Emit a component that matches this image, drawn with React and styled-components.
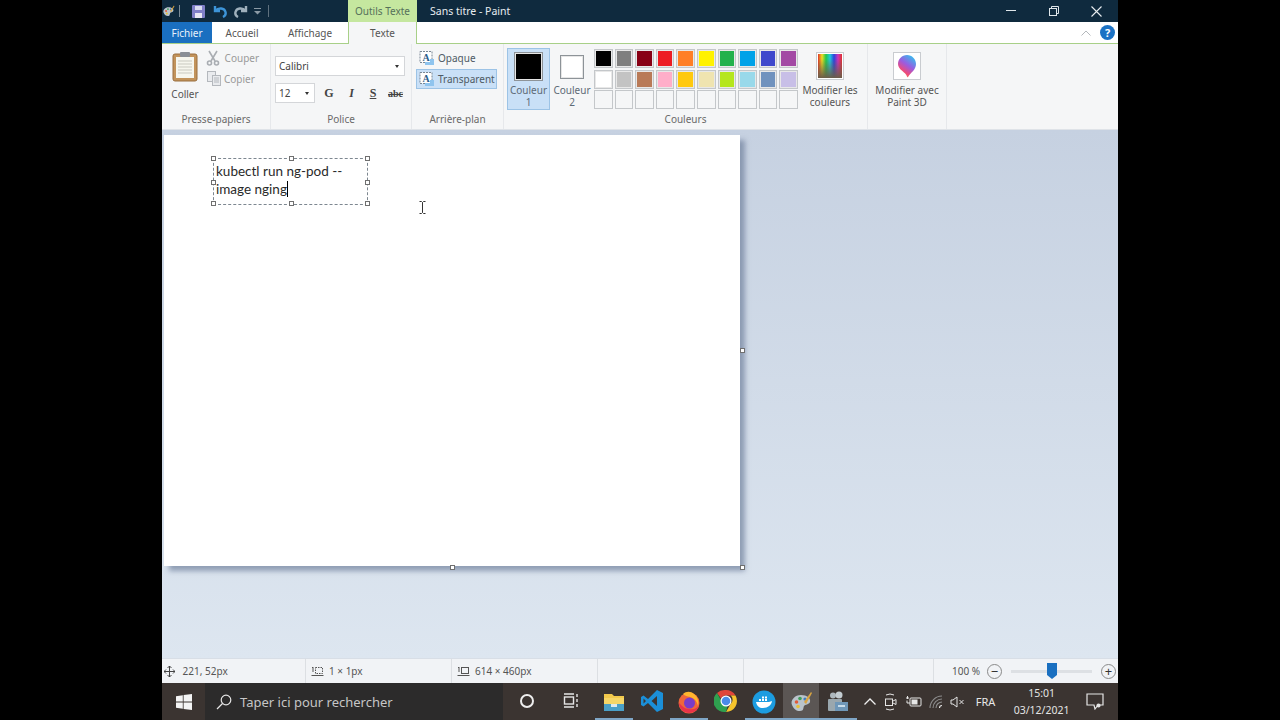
import React from 'react';
import styled, { createGlobalStyle } from 'styled-components';

const Global = createGlobalStyle`
  html, body { margin: 0; background: #000; }
  * { box-sizing: border-box; }
`;

const Page = styled.div`
  width: 1280px;
  height: 720px;
  overflow: hidden;
  background: #000;
  padding-left: 162px;
  font-family: 'Noto Sans', 'Open Sans', sans-serif;
`;

const Win = styled.div`
  width: 956px;
  height: 720px;
  display: flex;
  flex-direction: column;
`;

/* title bar */
const TitleBar = styled.div`
  height: 22px;
  flex: none;
  background: #0f2a3e;
  display: flex;
  align-items: center;
  color: #e8edf0;
  font-size: 10.5px;
`;

const Quick = styled.div`
  width: 186px;
  display: flex;
  align-items: center;
  height: 100%;
`;

const QuickSlot = styled.span`
  width: ${(p) => p.$w}px;
  height: 16px;
  display: flex;
  align-items: center;
  justify-content: center;
`;

const ToolTab = styled.div`
  width: 69px;
  height: 22px;
  background: #c5e79f;
  color: #55705a;
  font-size: 10px;
  display: flex;
  align-items: center;
  justify-content: center;
`;

const Title = styled.div`
  margin-left: 13px;
  flex: 1;
  font-size: 10.5px;
`;

const WinBtn = styled.span`
  width: 43px;
  height: 22px;
  display: flex;
  align-items: center;
  justify-content: center;
`;

/* tabs */
const TabRow = styled.div`
  height: 22px;
  flex: none;
  background: #fff;
  border-bottom: 1px solid #a8d088;
  display: flex;
  padding-right: 3px;
  align-items: stretch;
`;

const Tab = styled.div`
  width: ${(p) => p.$w}px;
  font-size: 10px;
  display: flex;
  align-items: center;
  justify-content: center;
  color: ${(p) => (p.$file ? '#e8f2fb' : '#555')};
  background: ${(p) => (p.$file ? '#1a6fc0' : p.$active ? '#f5f6f7' : '#fff')};
  ${(p) =>
    p.$active
      ? `border-left: 1px solid #a8d088; border-right: 1px solid #a8d088; height: 22px;`
      : ''}
`;

const TabEnd = styled.div`
  margin-left: auto;
  display: flex;
  align-items: center;
  gap: 9px;
`;

const Help = styled.span`
  width: 15px;
  height: 15px;
  border-radius: 50%;
  background: #1b72c4;
  color: #fff;
  font-size: 11px;
  font-weight: 700;
  display: flex;
  align-items: center;
  justify-content: center;
`;

/* ribbon */
const Ribbon = styled.div`
  height: 86px;
  flex: none;
  background: #f5f6f7;
  display: flex;
  border-bottom: 1px solid #dfe3e8;
`;

const Group = styled.div`
  width: ${(p) => p.$w}px;
  flex: none;
  display: flex;
  flex-direction: column;
  border-right: 1px solid #e6e8eb;
`;

const GroupBody = styled.div`
  flex: 1;
  display: flex;
  padding: 4px 0 0 ${(p) => p.$pad || 0}px;
  gap: ${(p) => p.$gap || 0}px;
`;

const GroupLabel = styled.div`
  height: 18px;
  margin-bottom: 0;
  text-align: center;
  font-size: 10px;
  line-height: 17px;
  color: #6a6a6a;
`;

const Big = styled.div`
  width: ${(p) => p.$w}px;
  flex: none;
  display: flex;
  flex-direction: column;
  align-items: center;
  font-size: 10px;
  line-height: 12px;
  color: #555;
  text-align: center;
`;

const BigIcon = styled.div`
  height: 36px;
  display: flex;
  align-items: center;
  justify-content: center;
  margin-bottom: ${(p) => p.$mb || 0}px;
`;

const SmallCol = styled.div`
  margin-left: 7px;
  display: flex;
  flex-direction: column;
  gap: 4px;
  padding-top: 1px;
`;

const SmallBtn = styled.div`
  height: 17px;
  display: flex;
  align-items: center;
  gap: 2px;
  font-size: 10px;
  color: #9a9a9a;
`;

const Combo = styled.div`
  width: ${(p) => p.$w}px;
  height: 20px;
  background: #fff;
  border: 1px solid #d4d6d9;
  font-size: 10px;
  color: #444;
  padding: 0 5px 0 3px;
  display: flex;
  align-items: center;
  justify-content: space-between;
  &::after {
    content: '';
    border-left: 2.5px solid transparent;
    border-right: 2.5px solid transparent;
    border-top: 3px solid #333;
  }
`;

const FontCol = styled.div`
  padding-top: 8px;
  display: flex;
  flex-direction: column;
  gap: 7px;
`;

const FontRow = styled.div`
  display: flex;
  align-items: center;
`;

const Fmt = styled.span`
  width: ${(p) => p.$w || 22}px;
  text-align: center;
  font-family: 'Liberation Serif', serif;
  font-size: ${(p) => p.$size || 12}px;
  font-weight: 700;
  font-style: ${(p) => (p.$i ? 'italic' : 'normal')};
  text-decoration: ${(p) => p.$deco || 'none'};
  color: #444;
`;

const BgCol = styled.div`
  display: flex;
  flex-direction: column;
  gap: 1px;
`;

const BgBtn = styled.div`
  width: 81px;
  height: 20px;
  display: flex;
  align-items: center;
  gap: 3px;
  padding-left: 2px;
  font-size: 10px;
  color: #4e5a64;
  background: ${(p) => (p.$on ? '#c9e0f7' : 'transparent')};
  border: 1px solid ${(p) => (p.$on ? '#9cc3e6' : 'transparent')};
`;

const ColorBtn = styled.div`
  width: ${(p) => p.$w}px;
  height: 62px;
  flex: none;
  display: flex;
  flex-direction: column;
  align-items: center;
  font-size: 10px;
  line-height: 12px;
  text-align: center;
  color: #5d6a76;
  background: ${(p) => (p.$on ? '#c9e0f7' : 'transparent')};
  border: 1px solid ${(p) => (p.$on ? '#9cc3e6' : 'transparent')};
`;

const SwatchBox = styled.div`
  height: 35px;
  display: flex;
  align-items: center;
  justify-content: center;
`;

const BigSwatch = styled.div`
  width: ${(p) => p.$s}px;
  height: ${(p) => p.$s}px;
  background: ${(p) => p.$c};
  border: 1px solid #8d9398;
  box-shadow: inset 0 0 0 1px #e6e6e6;
`;

const Palette = styled.div`
  width: 204px;
  height: 61px;
  margin: 1px 0 0 0;
  display: grid;
  grid-template-columns: repeat(10, 1fr);
  grid-auto-rows: 19px;
  gap: 1.5px 2px;
`;

const Cell = styled.div`
  border: 1px solid #c4c7ca;
  background: ${(p) => p.$c || '#f5f6f7'};
  box-shadow: inset 0 0 0 1px ${(p) => (p.$c ? '#e8e8e8' : '#f5f6f7')};
`;

const IconFrame = styled.div`
  width: 28px;
  height: 28px;
  background: #fff;
  border: 1px solid #c9ccd0;
  display: flex;
  align-items: center;
  justify-content: center;
`;

const Spectrum = styled.div`
  width: 24px;
  height: 24px;
  background:
    linear-gradient(to bottom, transparent 20%, #6b5d4a 100%),
    linear-gradient(to right, #e0342a, #eedd22, #22c84a, #22c8dd, #2a44dd, #cc33bb, #e0342a);
`;

/* canvas */
const Workspace = styled.div`
  flex: 1;
  position: relative;
  padding: 5px 0 0 2px;
  background: linear-gradient(to bottom, #c6d1e1, #dde6f0);
  border-left: 0;
`;

const Paper = styled.div`
  position: relative;
  width: 576px;
  height: 431px;
  background: #fff;
  box-shadow: 5px 5px 5px rgba(105, 122, 150, 0.65);
`;

const Grip = styled.span`
  position: absolute;
  width: 5px;
  height: 5px;
  background: #fff;
  border: 1px solid #6f6f6f;
  left: ${(p) => p.$x}px;
  top: ${(p) => p.$y}px;
`;

const TextBox = styled.div`
  position: absolute;
  left: 49px;
  top: 23px;
  width: 155px;
  height: 47px;
  border: 1px dashed #7d8790;
  padding: 3px 2px;
  font-family: Lato, 'Liberation Sans', sans-serif;
  font-size: 13.5px;
  line-height: 18px;
  color: #2a2a2a;
`;

const Caret = styled.span`
  display: inline-block;
  width: 1px;
  height: 16px;
  background: #000;
  vertical-align: -3px;
`;

const Beam = styled.svg`
  position: absolute;
  left: 205px;
  top: 42px;
`;

/* status bar */
const Status = styled.div`
  height: 25px;
  flex: none;
  background: #f1f3f6;
  border-top: 1px solid #d8dee6;
  display: flex;
  align-items: center;
  font-size: 10px;
  color: #555;
`;

const StatusCell = styled.div`
  width: ${(p) => p.$w}px;
  height: 100%;
  flex: none;
  display: flex;
  align-items: center;
  gap: 5px;
  padding-left: ${(p) => p.$pad || 0}px;
  border-right: ${(p) => (p.$end ? 'none' : '1px solid #dcdfe3')};
`;

const Zoom = styled.div`
  margin-left: 18px;
  display: flex;
  align-items: center;
`;

const RoundBtn = styled.span`
  width: 15px;
  height: 15px;
  border-radius: 50%;
  border: 1px solid #8a8a8a;
  color: #333;
  font-size: 13px;
  line-height: 12px;
  text-align: center;
  flex: none;
`;

const SliderTrack = styled.div`
  position: relative;
  width: 81px;
  height: 3px;
  margin: 0 9px;
  background: #dde0e4;
`;

const Thumb = styled.svg`
  position: absolute;
  left: 36px;
  top: -7px;
`;

/* taskbar */
const Taskbar = styled.div`
  height: 37px;
  flex: none;
  background: #3b3431;
  display: flex;
  align-items: stretch;
  color: #e8e8e8;
`;

const Start = styled.div`
  width: 43px;
  display: flex;
  align-items: center;
  justify-content: center;
  flex: none;
`;

const Search = styled.div`
  width: 298px;
  flex: none;
  background: #2c2b2b;
  display: flex;
  align-items: center;
  padding-left: 11px;
  gap: 8px;
  font-size: 13px;
  color: #c6c6c6;
`;

const TaskIcon = styled.div`
  width: ${(p) => p.$w || 37.4}px;
  margin-left: ${(p) => p.$ml || 0}px;
  flex: none;
  display: flex;
  align-items: center;
  justify-content: center;
  background: ${(p) => (p.$active ? '#5b5654' : 'transparent')};
  border-bottom: 2px solid ${(p) => (p.$open ? '#7fa6c6' : 'transparent')};
  padding-top: ${(p) => (p.$open ? 2 : 0)}px;
`;

const Tray = styled.div`
  flex: 1;
  display: flex;
  align-items: center;
  padding-left: 4px;
`;

const TraySlot = styled.span`
  width: ${(p) => p.$w}px;
  flex: none;
  display: flex;
  align-items: center;
  justify-content: center;
  font-size: 11px;
`;

const Clock = styled.div`
  width: 72px;
  flex: none;
  text-align: center;
  font-size: 10.5px;
  line-height: 17px;
  color: #e4e4e4;
`;

const swatches = [
  '#000000', '#7f7f7f', '#880015', '#ed1c24', '#ff7f27', '#fff200', '#22b14c', '#00a2e8', '#3f48cc', '#a349a4',
  '#ffffff', '#c3c3c3', '#b97a57', '#ffaec9', '#ffc90e', '#efe4b0', '#b5e61d', '#99d9ea', '#7092be', '#c8bfe7',
  null, null, null, null, null, null, null, null, null, null,
];

const PaintIcon = ({ size = 16 }) => (
  <svg width={size} height={size} viewBox="0 0 24 24">
    <path d="M3 15c-2-5 3-10 9-10 6 0 10 3 9 7-1 3-5 2-6 4s0 5-4 5c-4 0-6-2-8-6z" fill="#b9c4cc" />
    <circle cx="7.5" cy="12" r="1.8" fill="#e05a3a" />
    <circle cx="11" cy="8.5" r="1.8" fill="#3f9e5a" />
    <circle cx="16" cy="9" r="1.6" fill="#3a7cc4" />
    <circle cx="9" cy="16.5" r="1.8" fill="#e8c03a" />
    <path d="M15 12L22 2l1 1-6 11z" fill="#d9a441" />
  </svg>
);

const AIcon = () => (
  <svg width="16" height="16" viewBox="0 0 16 16">
    <rect x="1" y="1.5" width="12" height="11" fill="#fff" stroke="#7a8794" strokeDasharray="2 1" />
    <rect x="11" y="9" width="4" height="6" fill="#8fc4ee" />
    <rect x="6" y="12" width="9" height="3" fill="#8fc4ee" />
    <text x="3.5" y="10.5" fontFamily="Liberation Serif" fontSize="10" fontWeight="700" fill="#2b5c8a">A</text>
  </svg>
);

const Clipboard = () => (
  <svg width="28" height="32" viewBox="0 0 28 32">
    <rect x="2" y="4" width="24" height="27" rx="2" fill="#c2935b" stroke="#9a6f3e" />
    <rect x="5" y="7" width="18" height="21" fill="#f6f6ee" />
    <path d="M7 11h14M7 14h14M7 17h14M7 20h14M7 23h14" stroke="#c9c9c0" />
    <rect x="9" y="2" width="10" height="5" rx="1" fill="#8a8f96" />
  </svg>
);

const Scissors = () => (
  <svg width="14" height="16" viewBox="0 0 14 16" fill="none" stroke="#a9adb2" strokeWidth="1.6">
    <path d="M3 1l6 10M11 1L5 11" />
    <circle cx="3.5" cy="13" r="2" />
    <circle cx="10.5" cy="13" r="2" />
  </svg>
);

const CopyIcon = () => (
  <svg width="16" height="15" viewBox="0 0 16 15" fill="#e9ebee" stroke="#b4b8bd">
    <rect x="1.5" y="0.5" width="8" height="10" />
    <rect x="6.5" y="4.5" width="8" height="10" />
    <path d="M8 7h5M8 9h5M8 11h5" />
  </svg>
);

const Balloon = () => (
  <svg width="22" height="24" viewBox="0 0 22 24">
    <defs>
      <linearGradient id="bal" x1="0.8" y1="0" x2="0.2" y2="1">
        <stop offset="0" stopColor="#2ec4f0" />
        <stop offset="0.45" stopColor="#9a5ce0" />
        <stop offset="0.75" stopColor="#ee4a7a" />
        <stop offset="1" stopColor="#f29a3a" />
      </linearGradient>
    </defs>
    <path d="M11 1c5 0 9 4 9 9 0 6-5 8-8 13-.5.6-1 .2-1-.5C10 18 2 16 2 10c0-5 4-9 9-9z" fill="url(#bal)" />
  </svg>
);

const WinLogo = () => (
  <svg width="16" height="16" viewBox="0 0 16 16" fill="#f4f4f4">
    <path d="M0 2.2L6.8 1.2V7.6H0zM7.6 1.1L16 0V7.6H7.6zM0 8.4H6.8V14.8L0 13.8zM7.6 8.4H16V16L7.6 14.9z" />
  </svg>
);

const Glass = () => (
  <svg width="16" height="16" viewBox="0 0 16 16" fill="none" stroke="#e6e6e6" strokeWidth="1.2">
    <circle cx="10" cy="6" r="4.8" />
    <path d="M6.5 9.5L1 15" />
  </svg>
);

const TaskView = () => (
  <svg width="16" height="15" viewBox="0 0 16 15" fill="none" stroke="#e6e6e6" strokeWidth="1.4">
    <path d="M1 1h10M1 14h10" />
    <rect x="1.5" y="4" width="9" height="7" />
    <path d="M14 1v3M14 6v3M14 11v3" />
  </svg>
);

const Explorer = () => (
  <svg width="22" height="20" viewBox="0 0 22 20">
    <path d="M1 2h8l2 2h10v4H1z" fill="#f2c94c" />
    <rect x="1" y="6" width="20" height="13" fill="#f6d667" />
    <rect x="1" y="12" width="20" height="7" fill="#4aa0c8" />
    <rect x="8" y="12" width="6" height="3" fill="#dce9ef" />
  </svg>
);

const VSCode = () => (
  <svg width="24" height="24" viewBox="0 0 24 24">
    <path
      fillRule="evenodd"
      d="M17 1l6 3v16l-6 3L8 14l-4.5 3.5L1 16V8l2.5-1.5L8 10zM17 7l-5.5 5 5.5 5zM3.5 9.500v5L6 12z"
      fill="#1b8fd8"
    />
  </svg>
);

const Firefox = () => (
  <svg width="24" height="24" viewBox="0 0 24 24">
    <circle cx="12" cy="13" r="10.500" fill="#f0663a" />
    <path d="M6 4c3-3 8-3 11 0 4 3 5 8 4 12-1-5-4-8-8-9C10 6 8 6 6 4z" fill="#ffb52e" />
    <circle cx="12.500" cy="13" r="5.500" fill="#7a3cc8" />
    <path d="M2 13c0 6 5 10 10 10 5 0 9-3 10-8-2 4-6 5-10 4-4 0-7-3-10-6z" fill="#e8334a" />
  </svg>
);

const Chrome = () => (
  <svg width="24" height="24" viewBox="0 0 24 24">
    <path d="M12 1a11 11 0 0 1 9.500 5.500H12a5.500 5.500 0 0 0-5 3L3 4a11 11 0 0 1 9-3z" fill="#e0453a" />
    <path d="M21.500 6.500A11 11 0 0 1 12 23l4.700-8.200a5.500 5.500 0 0 0 0-8.300z" fill="#f5c42c" />
    <path d="M12 23A11 11 0 0 1 3 4l4.500 8a5.500 5.500 0 0 0 6 5z" fill="#2fa04f" />
    <circle cx="12" cy="12" r="5.500" fill="#fff" />
    <circle cx="12" cy="12" r="4.300" fill="#4a8be8" />
  </svg>
);

const Docker = () => (
  <svg width="24" height="24" viewBox="0 0 24 24">
    <circle cx="12" cy="12" r="11.500" fill="#1c9ce0" />
    <path d="M4 12h13c1 0 2-1 3-1-.5 4-4 7-9 7-4 0-6-2-7-6z" fill="#fff" />
    <path d="M7 9h2v2H7zM10 9h2v2h-2zM13 9h2v2h-2zM10 6.500h2v2h-2zM13 6.500h2v2h-2z" fill="#fff" />
  </svg>
);

const Camera = () => (
  <svg width="24" height="24" viewBox="0 0 24 24">
    <rect x="2" y="9" width="14" height="12" rx="1" fill="#9aa7ae" />
    <rect x="9" y="12" width="13" height="9" fill="#6f97b8" />
    <circle cx="7" cy="5.500" r="3" fill="#aeb8be" />
    <circle cx="13" cy="5" r="3.500" fill="#c3ccd1" />
    <rect x="12" y="15" width="7" height="2" fill="#c8dcea" />
  </svg>
);

const Tray1 = () => (
  <svg width="14" height="18" viewBox="0 0 14 18" fill="none" stroke="#e6e6e6">
    <path d="M2 2q4-2 8 0M2 16q4 2 8 0" />
    <rect x="1.500" y="6" width="7" height="6.500" />
    <path d="M9 8l3-1.500v5L9 10" />
  </svg>
);

const Power = () => (
  <svg width="17" height="14" viewBox="0 0 17 14">
    <path d="M1 3h3M2.500 1v3M2 5.500v2.500h3" stroke="#e6e6e6" fill="none" />
    <rect x="5" y="3" width="11" height="8" rx="1" fill="none" stroke="#e6e6e6" />
    <rect x="6.500" y="4.500" width="6" height="5" fill="#e6e6e6" />
  </svg>
);

const Wifi = () => (
  <svg width="16" height="14" viewBox="0 0 16 14" fill="none" stroke="#8d8d8d" strokeWidth="1.100">
    <path d="M1 13A12 12 0 0 1 13 1M4 13a9 9 0 0 1 9-9M7 13a6 6 0 0 1 6-6" />
    <path d="M10.500 13a2.500 2.500 0 0 1 2.500-2.500" stroke="#e6e6e6" />
  </svg>
);

const Speaker = () => (
  <svg width="15" height="14" viewBox="0 0 15 14" fill="none" stroke="#e6e6e6">
    <path d="M1 5v4h2l4 3V2L3 5zM9.500 5l4 4M13.500 5l-4 4" />
  </svg>
);

const Notif = () => (
  <svg width="18" height="17" viewBox="0 0 18 17" fill="none" stroke="#e6e6e6" strokeWidth="1.200">
    <path d="M1 1h16v11h-5l-3 4-1-4H1z" />
    <circle cx="12.500" cy="12.500" r="1.500" fill="#e6e6e6" />
  </svg>
);

const handles = [
  [-3, -3], [75, -3], [151, -3],
  [-3, 21], [151, 21],
  [-3, 42], [75, 42], [151, 42],
];

export default function App() {
  return (
    <Page>
      <Global />
      <Win>
        <TitleBar>
          <Quick>
            <QuickSlot $w={13}><PaintIcon size={14} /></QuickSlot>
            <QuickSlot $w={9}>
              <svg width="2" height="12"><rect width="1" height="12" fill="#7b8b97" /></svg>
            </QuickSlot>
            <QuickSlot $w={28}>
              <svg width="13" height="13" viewBox="0 0 13 13">
                <rect width="13" height="13" rx="1" fill="#7f7fc8" />
                <rect x="3" y="1" width="7" height="4" fill="#d8dcf0" />
                <rect x="3" y="8" width="7" height="5" fill="#e8e8f4" />
              </svg>
            </QuickSlot>
            <QuickSlot $w={16}>
              <svg width="15" height="14" viewBox="0 0 15 14" fill="none" stroke="#3d94d8" strokeWidth="2.400">
                <path d="M2 2v5h5M2.500 7c3-4 9-3 10 1 .5 2-.5 4-2.500 5" />
              </svg>
            </QuickSlot>
            <QuickSlot $w={24}>
              <svg width="15" height="14" viewBox="0 0 15 14" fill="none" stroke="#9fb0bc" strokeWidth="2.400">
                <path d="M13 2v5H8M12.500 7c-3-4-9-3-10 1-.5 2 .5 4 2.500 5" />
              </svg>
            </QuickSlot>
            <QuickSlot $w={12}>
              <svg width="8" height="8" viewBox="0 0 8 8" fill="#8b9aa5">
                <rect y="1" width="7" height="1" />
                <path d="M0 4h7L3.500 7.500z" />
              </svg>
            </QuickSlot>
            <QuickSlot $w={10}>
              <svg width="2" height="12"><rect width="1" height="12" fill="#5f717e" /></svg>
            </QuickSlot>
          </Quick>
          <ToolTab>Outils Texte</ToolTab>
          <Title>Sans titre - Paint</Title>
          <WinBtn>
            <svg width="10" height="2"><rect width="10" height="1" fill="#dfe6ea" /></svg>
          </WinBtn>
          <WinBtn>
            <svg width="10" height="10" viewBox="0 0 10 10" fill="none" stroke="#dfe6ea">
              <rect x="0.500" y="2.500" width="7" height="7" />
              <path d="M2.500 2.500v-2h7v7h-2" />
            </svg>
          </WinBtn>
          <WinBtn>
            <svg width="11" height="11" viewBox="0 0 11 11" stroke="#e8edf0" strokeWidth="1.100">
              <path d="M0.500 0.500l10 10M10.500 0.500l-10 10" />
            </svg>
          </WinBtn>
        </TitleBar>

        <TabRow>
          <Tab $w={50} $file>Fichier</Tab>
          <Tab $w={60}>Accueil</Tab>
          <Tab $w={76}>Affichage</Tab>
          <Tab $w={69} $active>Texte</Tab>
          <TabEnd>
            <svg width="10" height="6" viewBox="0 0 10 6" fill="none" stroke="#b4b8bc">
              <path d="M0.500 5.500L5 1l4.500 4.500" />
            </svg>
            <Help>?</Help>
          </TabEnd>
        </TabRow>

        <Ribbon>
          <Group $w={109}>
            <GroupBody $pad={9}>
              <Big $w={28}>
                <BigIcon $mb={4}><Clipboard /></BigIcon>
                Coller
              </Big>
              <SmallCol>
                <SmallBtn><Scissors />&nbsp;Couper</SmallBtn>
                <SmallBtn><CopyIcon />Copier</SmallBtn>
              </SmallCol>
            </GroupBody>
            <GroupLabel>Presse-papiers</GroupLabel>
          </Group>
          <Group $w={141}>
            <GroupBody $pad={4}>
              <FontCol>
                <Combo $w={130}>Calibri</Combo>
                <FontRow>
                  <Combo $w={40}>12</Combo>
                  <Fmt $w={28}>G</Fmt>
                  <Fmt $w={17} $i>I</Fmt>
                  <Fmt $w={26} $deco="underline">S</Fmt>
                  <Fmt $w={19} $size={10} $deco="line-through">abc</Fmt>
                </FontRow>
              </FontCol>
            </GroupBody>
            <GroupLabel>Police</GroupLabel>
          </Group>
          <Group $w={92}>
            <GroupBody $pad={4}>
              <BgCol>
                <BgBtn><AIcon />Opaque</BgBtn>
                <BgBtn $on><AIcon />Transparent</BgBtn>
              </BgCol>
            </GroupBody>
            <GroupLabel>Arrière-plan</GroupLabel>
          </Group>
          <Group $w={364}>
            <GroupBody $pad={3}>
              <ColorBtn $w={43} $on>
                <SwatchBox><BigSwatch $s={29} $c="#000" /></SwatchBox>
                Couleur<br />1
              </ColorBtn>
              <ColorBtn $w={44}>
                <SwatchBox><BigSwatch $s={24} $c="#fff" /></SwatchBox>
                Couleur<br />2
              </ColorBtn>
              <Palette>
                {swatches.map((c, i) => (
                  <Cell key={i} $c={c} />
                ))}
              </Palette>
              <Big $w={64}>
                <BigIcon $mb={0}>
                  <IconFrame><Spectrum /></IconFrame>
                </BigIcon>
                Modifier les couleurs
              </Big>
            </GroupBody>
            <GroupLabel>Couleurs</GroupLabel>
          </Group>
          <Group $w={79}>
            <GroupBody>
              <Big $w={78}>
                <BigIcon $mb={0}>
                  <IconFrame><Balloon /></IconFrame>
                </BigIcon>
                Modifier avec Paint 3D
              </Big>
            </GroupBody>
            <GroupLabel />
          </Group>
        </Ribbon>

        <Workspace>
          <Paper>
            <TextBox>
              kubectl run ng-pod --
              <br />
              image nging<Caret />
              {handles.map(([x, y], i) => (
                <Grip key={i} $x={x} $y={y} />
              ))}
              <Beam width="7" height="13" viewBox="0 0 7 13" fill="none" stroke="#333">
                <path d="M0.500 0.500h2l1 1 1-1h2M3.500 1.500v10M0.500 12.500h2l1-1 1 1h2" />
              </Beam>
            </TextBox>
            <Grip $x={286} $y={430} />
            <Grip $x={576} $y={213} />
            <Grip $x={576} $y={430} />
          </Paper>
        </Workspace>

        <Status>
          <StatusCell $w={144} $pad={2}>
            <svg width="11" height="11" viewBox="0 0 11 11" stroke="#444" fill="none">
              <path d="M5.500 0v11M0 5.500h11M3.500 2l2-2 2 2M3.500 9l2 2 2-2M2 3.500l-2 2 2 2M9 3.500l2 2-2 2" />
            </svg>
            &nbsp;221, 52px
          </StatusCell>
          <StatusCell $w={146} $pad={5}>
            <svg width="13" height="11" viewBox="0 0 13 11" stroke="#555" fill="none">
              <path d="M1 2l1-1v5M0.500 9.500h12" />
              <rect x="4.500" y="1.500" width="7" height="6" strokeDasharray="1.500 1" />
            </svg>
            1 × 1px
          </StatusCell>
          <StatusCell $w={146} $pad={5}>
            <svg width="13" height="11" viewBox="0 0 13 11" stroke="#555" fill="none">
              <path d="M1 2l1-1v5M0.500 9.500h12" />
              <rect x="4.500" y="1.500" width="7" height="6" />
            </svg>
            614 × 460px
          </StatusCell>
          <StatusCell $w={146} />
          <StatusCell $w={190} />
          <Zoom>
            100 %
            <RoundBtn style={{ marginLeft: 7 }}>−</RoundBtn>
            <SliderTrack>
              <Thumb width="10" height="16" viewBox="0 0 10 16">
                <path d="M0 0h10v12l-5 4-5-4z" fill="#1a6fc0" />
              </Thumb>
            </SliderTrack>
            <RoundBtn>+</RoundBtn>
          </Zoom>
        </Status>

        <Taskbar>
          <Start><WinLogo /></Start>
          <Search>
            <Glass />
            Taper ici pour rechercher
          </Search>
          <TaskIcon $w={38} $ml={5}>
            <svg width="16" height="16" viewBox="0 0 16 16" fill="none" stroke="#eee" strokeWidth="2">
              <circle cx="8" cy="8" r="6" />
            </svg>
          </TaskIcon>
          <TaskIcon $w={38} $ml={6}><TaskView /></TaskIcon>
          <TaskIcon $w={38} $ml={5} $open><Explorer /></TaskIcon>
          <TaskIcon><VSCode /></TaskIcon>
          <TaskIcon $open><Firefox /></TaskIcon>
          <TaskIcon><Chrome /></TaskIcon>
          <TaskIcon $open><Docker /></TaskIcon>
          <TaskIcon $w={36} $active $open><PaintIcon size={24} /></TaskIcon>
          <TaskIcon $w={38} $open><Camera /></TaskIcon>
          <Tray>
            <TraySlot $w={18}>
              <svg width="12" height="7" viewBox="0 0 12 7" fill="none" stroke="#eee" strokeWidth="1.300">
                <path d="M0.500 6.500L6 1l5.500 5.500" />
              </svg>
            </TraySlot>
            <TraySlot $w={24}><Tray1 /></TraySlot>
            <TraySlot $w={22}><Power /></TraySlot>
            <TraySlot $w={24}><Wifi /></TraySlot>
            <TraySlot $w={17}><Speaker /></TraySlot>
            <TraySlot $w={40}>FRA</TraySlot>
            <Clock>15:01<br />03/12/2021</Clock>
            <TraySlot $w={34}><Notif /></TraySlot>
          </Tray>
        </Taskbar>
      </Win>
    </Page>
  );
}
